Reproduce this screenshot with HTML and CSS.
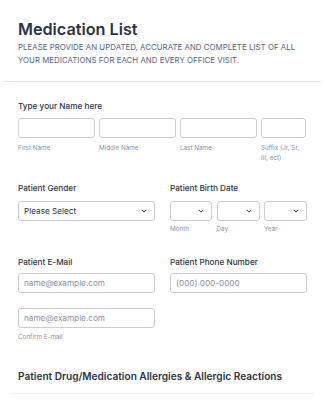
FILE: index.html
```html
<!DOCTYPE html>
<html>
<head>
<meta charset="utf-8">
<link rel="stylesheet" href="styles.css">
</head>
<body>
<div class="page">
  <header class="head">
    <h1 class="title">Medication List</h1>
    <p class="subtitle">PLEASE PROVIDE AN UPDATED, ACCURATE AND COMPLETE LIST OF ALL YOUR MEDICATIONS FOR EACH AND EVERY OFFICE VISIT.</p>
  </header>
  <div class="divider"></div>

  <section class="field name-field">
    <div class="label">Type your Name here</div>
    <div class="name-grid">
      <div class="sub"><div class="input"></div><span class="sublabel">First Name</span></div>
      <div class="sub"><div class="input"></div><span class="sublabel">Middle Name</span></div>
      <div class="sub"><div class="input"></div><span class="sublabel">Last Name</span></div>
      <div class="sub"><div class="input"></div><span class="sublabel">Suffix (Jr, Sr, III, ect)</span></div>
    </div>
  </section>

  <section class="row row-gender">
    <div class="col">
      <div class="label">Patient Gender</div>
      <div class="select wide"><span class="sel-text">Please Select</span><svg class="chev" viewBox="0 0 8 5" width="6" height="4"><path d="M1 1l3 3 3-3" fill="none" stroke="#2c3345" stroke-width="1.2"/></svg></div>
    </div>
    <div class="col">
      <div class="label">Patient Birth Date</div>
      <div class="date-grid">
        <div class="sub"><div class="select"><svg class="chev" viewBox="0 0 8 5" width="6" height="4"><path d="M1 1l3 3 3-3" fill="none" stroke="#2c3345" stroke-width="1.2"/></svg></div><span class="sublabel date-sub">Month</span></div>
        <div class="sub"><div class="select"><svg class="chev" viewBox="0 0 8 5" width="6" height="4"><path d="M1 1l3 3 3-3" fill="none" stroke="#2c3345" stroke-width="1.2"/></svg></div><span class="sublabel date-sub">Day</span></div>
        <div class="sub"><div class="select"><svg class="chev" viewBox="0 0 8 5" width="6" height="4"><path d="M1 1l3 3 3-3" fill="none" stroke="#2c3345" stroke-width="1.2"/></svg></div><span class="sublabel date-sub">Year</span></div>
      </div>
    </div>
  </section>

  <section class="row row-contact">
    <div class="col">
      <div class="label">Patient E-Mail</div>
      <div class="input text"><span class="ph">name@example.com</span></div>
      <div class="input text confirm"><span class="ph">name@example.com</span></div>
      <span class="sublabel confirm-sub">Confirm E-mail</span>
    </div>
    <div class="col">
      <div class="label">Patient Phone Number</div>
      <div class="input text"><span class="ph">(000) 000-0000</span></div>
    </div>
  </section>

  <section class="allergy">
    <h2 class="section-title">Patient Drug/Medication Allergies &amp; Allergic Reactions</h2>
    <div class="faint-line"></div>
  </section>
</div>
</body>
</html>
```

FILE: styles.css
```css
* { box-sizing: border-box; }
html, body { margin: 0; padding: 0; background: #fff; }
body { font-family: Inter, "Noto Sans", sans-serif; color: #2c3345; }
.page { width: 325px; padding-top: 19px; }
.head { padding: 0 18px; }
.title { margin: 0; font-size: 16.2px; font-weight: 600; line-height: 20px; color: #2c3345; }
.subtitle { margin: 2px 0 0; font-size: 7.8px; line-height: 13px; color: #57647e; text-transform: uppercase; letter-spacing: 0.05px; }
.divider { height: 1px; background: #e3e5ec; margin: 14px 4px 0; }
.field { padding: 0 18px; }
.label { font-size: 8.2px; font-weight: 500; line-height: 12px; color: #2c3345; }
.name-field { margin-top: 18px; }
.name-grid { display: grid; grid-template-columns: 77px 77px 77px 45px; column-gap: 4px; margin-top: 6px; }
.sub { display: flex; flex-direction: column; }
.input { height: 20px; border: 1px solid #c9cbd9; border-radius: 3px; background: #fff; }
.sublabel { font-size: 6.3px; line-height: 10px; color: #8d8fa8; margin-top: 5px; }
.row { display: grid; grid-template-columns: 137px 137px; column-gap: 15px; padding: 0 18px; }
.row-gender { margin-top: 19px; }
.select { height: 20px; border: 1px solid #c9cbd9; border-radius: 3px; display: flex; align-items: center; justify-content: flex-end; padding: 0 7px; }
.select.wide { justify-content: space-between; margin-top: 7px; padding-left: 5px; }
.sel-text { font-size: 8.2px; color: #2c3345; }
.chev { flex: none; }
.date-grid { display: grid; grid-template-columns: 42px 43px 43px; column-gap: 4.5px; margin-top: 7px; }
.date-sub { margin-top: 3px; }
.row-contact { margin-top: 22px; }
.input.text { display: flex; align-items: center; padding: 0 5px; margin-top: 5px; }
.input.confirm { margin-top: 15px; }
.confirm-sub { display: block; margin-top: 4px; }
.ph { font-size: 8.2px; color: #8d8fa8; }
.allergy { padding: 0 11px; margin-top: 27px; }
.section-title { margin: 0 0 0 7px; font-size: 10.1px; font-weight: 600; line-height: 14px; color: #2c3345; }
.faint-line { height: 1px; background: #f1f2f5; margin-top: 10px; }
```
